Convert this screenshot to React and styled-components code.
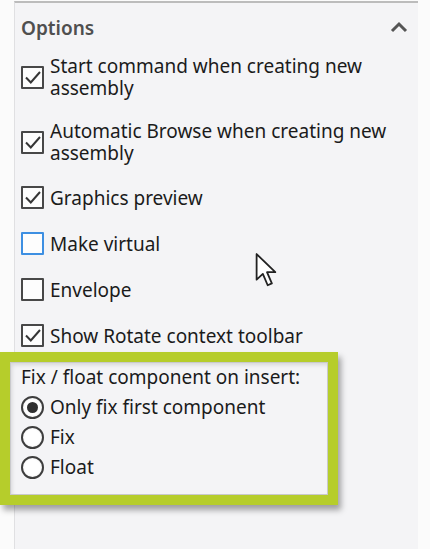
import styled, { createGlobalStyle } from 'styled-components';

const GlobalStyle = createGlobalStyle`
  html, body {
    margin: 0;
    padding: 0;
    background: #fbfbfb;
  }
  body {
    font-family: "Noto Sans", "Open Sans", sans-serif;
    color: #1b1b1b;
  }
`;

const OPTIONS = [
  { key: 'start', label: 'Start command when creating new assembly', checked: true },
  { key: 'browse', label: 'Automatic Browse when creating new assembly', checked: true },
  { key: 'preview', label: 'Graphics preview', checked: true },
  { key: 'virtual', label: 'Make virtual', checked: false, focused: true },
  { key: 'envelope', label: 'Envelope', checked: false },
  { key: 'rotate', label: 'Show Rotate context toolbar', checked: true },
];

const FIX_MODES = [
  { key: 'first', label: 'Only fix first component' },
  { key: 'fix', label: 'Fix' },
  { key: 'float', label: 'Float' },
];

const Page = styled.div`
  position: relative;
  display: flex;
  height: 549px;
  padding-left: 14px;
  padding-top: 1px;
  box-sizing: border-box;
  overflow: hidden;
`;

const Panel = styled.section`
  width: 404px;
  background: #f4f4f6;
  border-top: 2px solid #bcbcbc;
  border-left: 1px solid #e0e0e2;
  padding: 14px 6px 0 6px;
  box-sizing: border-box;
`;

const Header = styled.div`
  display: flex;
  align-items: center;
  justify-content: space-between;
  height: 22px;
  margin-bottom: 16px;
`;

const Title = styled.h3`
  margin: 0;
  font-size: 19px;
  line-height: 22px;
  font-weight: 600;
  color: #4f4f4f;
`;

const Chevron = styled.svg`
  width: 18px;
  height: 12px;
  margin-right: 4px;
  margin-top: -2px;
`;

const OptionList = styled.div`
  display: flex;
  flex-direction: column;
  gap: 21px;
`;

const CheckRow = styled.label`
  display: flex;
  align-items: center;
  gap: 6px;
  min-height: 25px;
  font-size: 19px;
  line-height: 22px;
  color: #1b1b1b;
`;

const Box = styled.span`
  flex: none;
  width: 23px;
  height: 23px;
  box-sizing: border-box;
  border: 2px solid ${(p) => (p.$focused ? '#3d8fe2' : '#484848')};
  border-radius: 1px;
  background: #fdfdfd;
  display: flex;
  align-items: center;
  justify-content: center;
`;

const LabelText = styled.span`
  padding-right: 10px;
`;

const Group = styled.fieldset`
  margin: 4px 0 0 -21px;
  width: 338px;
  box-sizing: border-box;
  border: 10px solid #b6cd2b;
  padding: 0 0 13px 11px;
  background: #f4f4f6;
  box-shadow: 3px 5px 6px rgba(0, 0, 0, 0.35),
    inset 0 0 0 1px #c9c9cc,
    inset 2px 3px 4px rgba(0, 0, 0, 0.12);
`;

const GroupTitle = styled.div`
  font-size: 19px;
  line-height: 30px;
  color: #1b1b1b;
`;

const RadioRow = styled.label`
  display: flex;
  align-items: center;
  gap: 6px;
  height: 30px;
  font-size: 19px;
  color: #1b1b1b;
`;

const Radio = styled.span`
  flex: none;
  width: 23px;
  height: 23px;
  box-sizing: border-box;
  border-radius: 50%;
  border: 2px solid #3e3e3e;
  background: radial-gradient(circle, #ffffff 55%, #e6e6e6 100%);
  display: flex;
  align-items: center;
  justify-content: center;

  &::after {
    content: '';
    width: 11px;
    height: 11px;
    border-radius: 50%;
    background: #303030;
    display: ${(p) => (p.$on ? 'block' : 'none')};
  }
`;

const Cursor = styled.svg`
  position: absolute;
  left: 254px;
  top: 252px;
  width: 26px;
  height: 36px;
`;

function CheckMark() {
  return (
    <svg width="18" height="15" viewBox="0 0 18 15">
      <polyline points="2,7.5 6.8,12.5 16,2" fill="none" stroke="#363636" strokeWidth="2" />
    </svg>
  );
}

export default function App() {
  return (
    <Page>
      <GlobalStyle />
      <Panel>
        <Header>
          <Title>Options</Title>
          <Chevron viewBox="0 0 18 12">
            <polyline points="2,10 9,3 16,10" fill="none" stroke="#555" strokeWidth="3" />
          </Chevron>
        </Header>

        <OptionList>
          {OPTIONS.map((opt) => (
            <CheckRow key={opt.key}>
              <Box $focused={opt.focused}>{opt.checked ? <CheckMark /> : null}</Box>
              <LabelText>{opt.label}</LabelText>
            </CheckRow>
          ))}
        </OptionList>

        <Group>
          <GroupTitle>Fix / float component on insert:</GroupTitle>
          {FIX_MODES.map((mode, i) => (
            <RadioRow key={mode.key}>
              <Radio $on={i === 0} />
              <span>{mode.label}</span>
            </RadioRow>
          ))}
        </Group>
      </Panel>

      <Cursor viewBox="0 0 18 26">
        <path
          d="M1.5 1.5 L1.5 20 L6 15.8 L9.5 24 L12.5 22.7 L9 14.6 L15 14.6 Z"
          fill="#ffffff"
          stroke="#222"
          strokeWidth="1.3"
          strokeLinejoin="round"
        />
      </Cursor>
    </Page>
  );
}
